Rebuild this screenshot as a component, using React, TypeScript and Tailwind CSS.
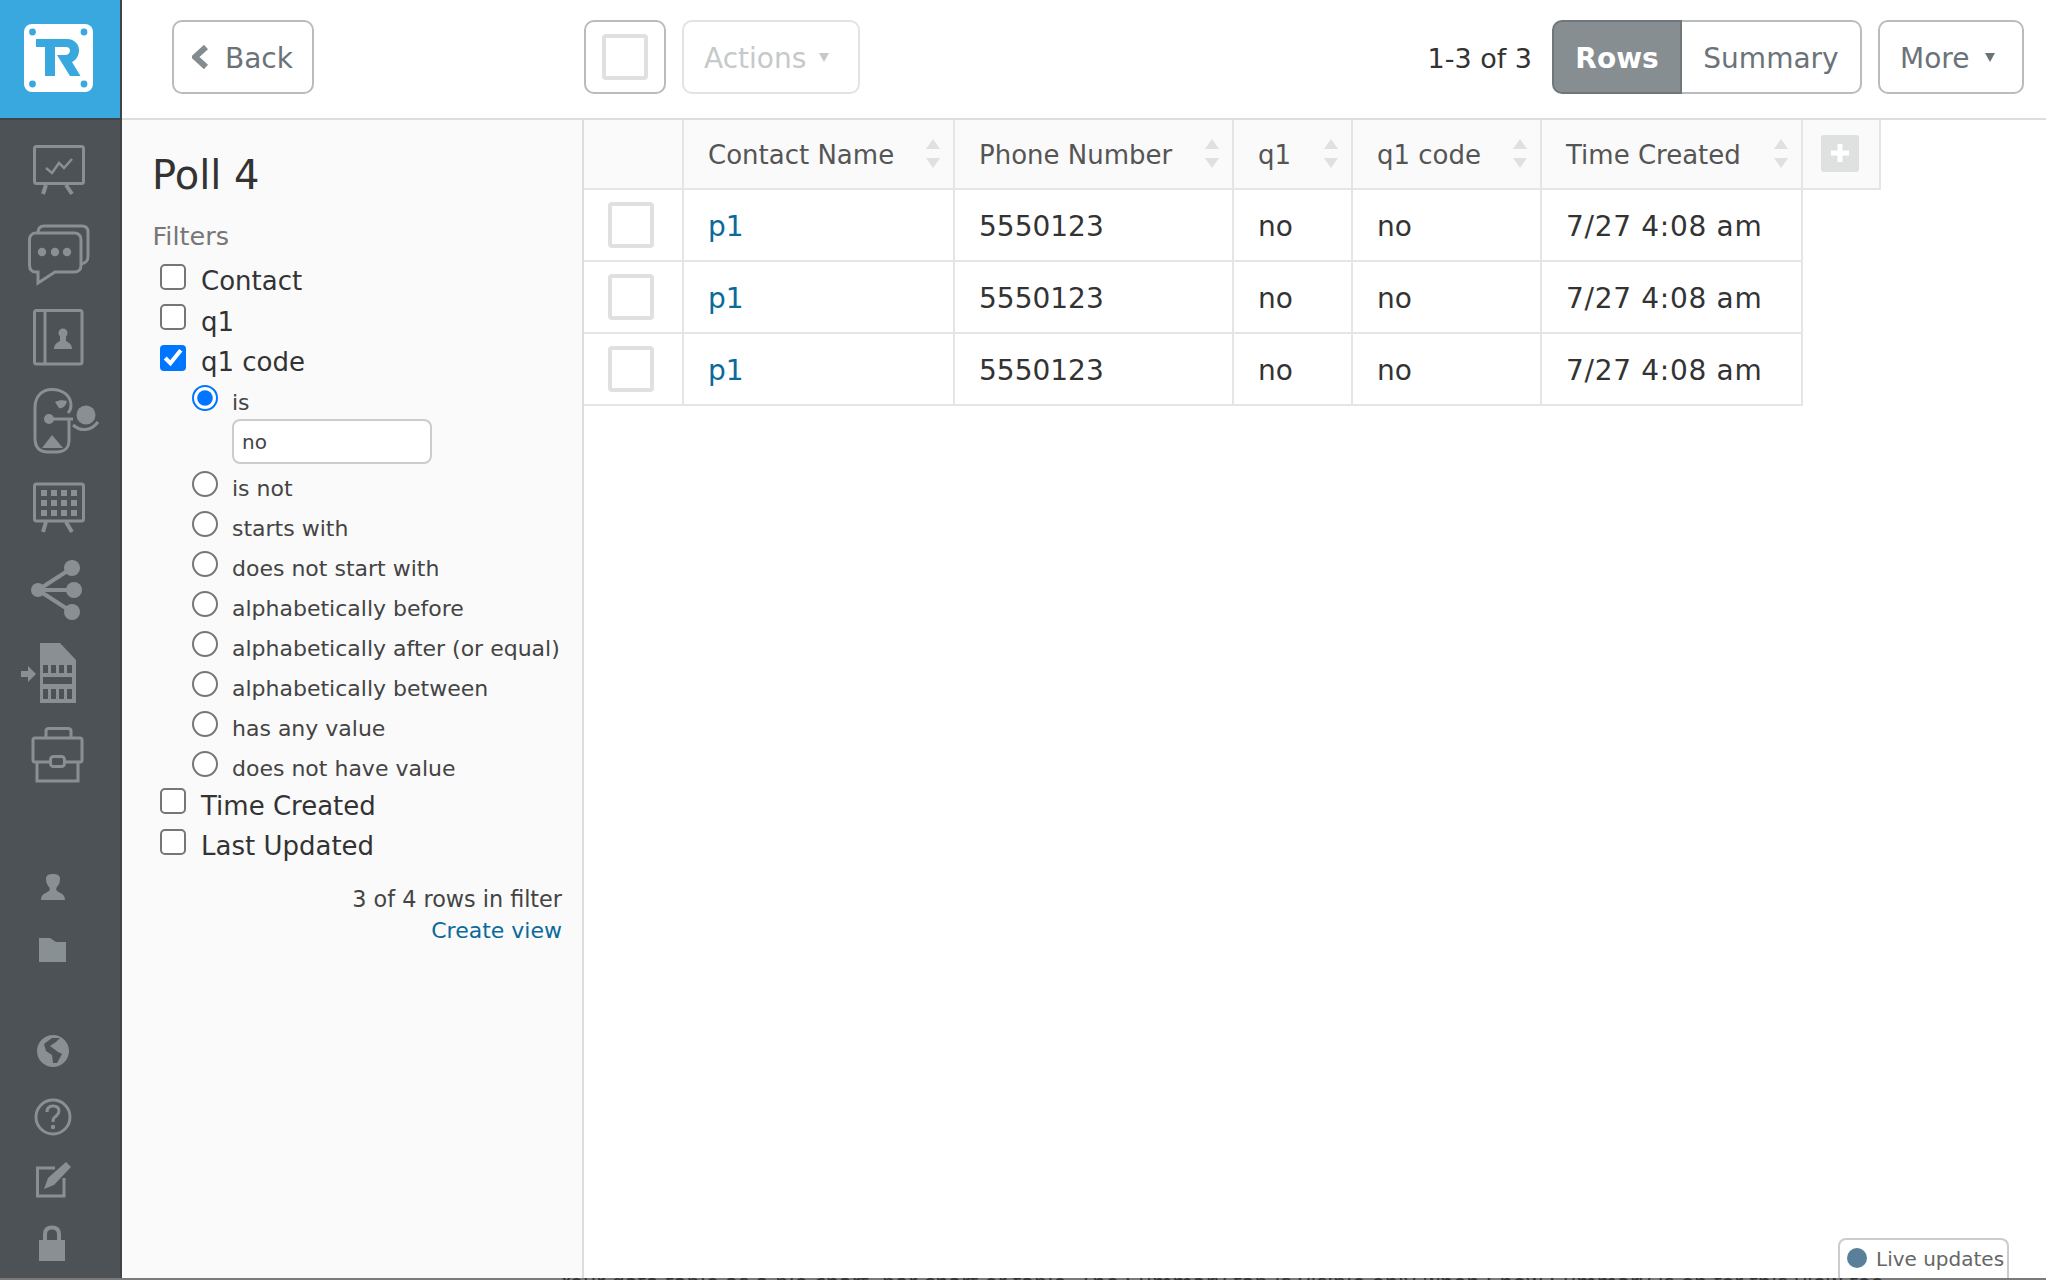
import type { ReactNode } from 'react'

const ICON = '#899093'
const SIDEBAR = '#4c5256'

function Row({ top, h, children }: { top: number; h: number; children: ReactNode }) {
  return (
    <svg viewBox={`0 ${top} 120 ${h}`} width={120} height={h} className="block shrink-0">
      {children}
    </svg>
  )
}

function Logo() {
  return (
    <svg viewBox="0 0 120 118" width={120} height={118} className="block">
      <rect x="24" y="24" width="69" height="68" rx="8" fill="#fff" />
      <circle cx="32.500" cy="32" r="3.400" fill="#38a8df" />
      <circle cx="84" cy="32" r="3.400" fill="#38a8df" />
      <circle cx="32.500" cy="84" r="3.400" fill="#38a8df" />
      <circle cx="84" cy="84" r="3.400" fill="#38a8df" />
      <path d="M36 39H67C75 39 79 45 79 50C79 56 76 60 72 62L80.500 76H70L57 55H65C68 55 70 53 70 50.500C70 48 68 47 66 47H55V76H45V47H36Z" fill="#38a8df" />
    </svg>
  )
}

function TopIcons() {
  return (
    <>
      <Row top={120} h={90}>
        <rect x="34.500" y="146.500" width="49" height="37" rx="2" fill="none" stroke={ICON} strokeWidth="3" />
        <polyline points="46,168 52,173 59,163 64,168 72,159" fill="none" stroke={ICON} strokeWidth="2.500" />
        <path d="M46 185L43 194M66 185L72 194" stroke={ICON} strokeWidth="4" />
      </Row>
      <Row top={210} h={85}>
        <path d="M38 233C38 228 40 226 44 226H82C86 226 88 228 88 232V256C88 261 86 263 81 264" fill="none" stroke={ICON} strokeWidth="3" />
        <path d="M36 233H74C79 233 81 236 81 240V265C81 270 79 272 74 272H55L38 283V272H36C32 272 29.500 270 29.500 265V240C29.500 236 32 233 36 233Z" fill={SIDEBAR} stroke={ICON} strokeWidth="3" />
        <circle cx="42" cy="252" r="4.200" fill={ICON} />
        <circle cx="55" cy="252" r="4.200" fill={ICON} />
        <circle cx="67" cy="252" r="4.200" fill={ICON} />
      </Row>
      <Row top={295} h={80}>
        <rect x="34.500" y="310.500" width="47.500" height="53.500" rx="2" fill="none" stroke={ICON} strokeWidth="3" />
        <path d="M45 310V364" stroke={ICON} strokeWidth="3" />
        <circle cx="63" cy="333" r="4.500" fill={ICON} />
        <path d="M54 349C54 344 58 342 60 341V336H66V341C68 342 72 344 72 349Z" fill={ICON} />
      </Row>
      <Row top={375} h={95}>
        <path d="M35 438V408C35 396 42 389.500 52 389.500C63 389.500 71 396 71 405C71 408 70 411 68 413" fill="none" stroke={ICON} strokeWidth="3" />
        <path d="M35 438C35 448 40 452 48 452H57C64 452 69 448 69 440V420" fill="none" stroke={ICON} strokeWidth="3" />
        <path d="M55 402C59 400 63 400 67 401C66 406 62 409 59 408Z" fill={ICON} />
        <circle cx="49" cy="419" r="5" fill={ICON} />
        <path d="M49 419H73" fill="none" stroke={ICON} strokeWidth="3" />
        <circle cx="86" cy="415" r="9.500" fill={ICON} />
        <path d="M73 425C81 432 91 431 98 422" fill="none" stroke={ICON} strokeWidth="3" />
        <path d="M42 448L52 435L63 448Z" fill={ICON} />
      </Row>
      <Row top={470} h={80}>
        <rect x="34.500" y="484" width="49" height="37" rx="2" fill="none" stroke={ICON} strokeWidth="3" />
        {[41, 51, 61, 71].map(x =>
          [490, 500, 510].map(y => <rect key={`${x}-${y}`} x={x} y={y} width="6" height="6" fill={ICON} />)
        )}
        <path d="M46 522L43 532M66 522L72 532" stroke={ICON} strokeWidth="4" />
      </Row>
      <Row top={550} h={85}>
        <path d="M38 590L72 568M38 590H74M38 590L72 612" stroke={ICON} strokeWidth="4" />
        <circle cx="38" cy="590" r="7" fill={ICON} />
        <circle cx="72" cy="568" r="8" fill={ICON} />
        <circle cx="74" cy="590" r="8" fill={ICON} />
        <circle cx="72" cy="612" r="8" fill={ICON} />
      </Row>
      <Row top={635} h={85}>
        <path d="M40 643H60L76 660V703H40Z" fill={ICON} />
        {[43, 51, 59, 67].map(x => (
          <rect key={x} x={x} y="665" width="5" height="8" fill={SIDEBAR} />
        ))}
        <rect x="43" y="677" width="29" height="7" fill={SIDEBAR} />
        {[43, 51, 59, 67].map(x => (
          <rect key={x} x={x} y="689" width="5" height="10" fill={SIDEBAR} />
        ))}
        <path d="M21 671H28V666L36 674L28 682V677H21Z" fill={ICON} />
      </Row>
      <Row top={720} h={70}>
        <rect x="33" y="738" width="49" height="24" rx="2" fill="none" stroke={ICON} strokeWidth="3" />
        <path d="M37 762V781H78V762" fill="none" stroke={ICON} strokeWidth="3" />
        <path d="M46 737V731C46 729 47 728.500 49 728.500H68C70 728.500 71 729 71 731V737" fill="none" stroke={ICON} strokeWidth="3" />
        <rect x="50.500" y="756.500" width="14" height="10" rx="3" fill={SIDEBAR} stroke={ICON} strokeWidth="3" />
      </Row>
    </>
  )
}

function BottomIcons() {
  return (
    <>
      <Row top={860} h={50}>
        <path d="M41 900C41 894 46 893 49 891C50 890 50 888 49 887C47 885 46 882 46 879C46 875 49 874 53 874C57 874 60 875 60 879C60 882 59 885 57 887C56 888 56 890 57 891C60 893 65 894 65 900Z" fill={ICON} />
      </Row>
      <Row top={910} h={110}>
        <path d="M39 938H50L56 942H66V962H39Z" fill={ICON} />
      </Row>
      <Row top={1020} h={60}>
        <circle cx="53" cy="1051" r="16" fill={ICON} />
        <path d="M44 1044L52 1038L60 1038L56 1042L50 1046L58 1052L62 1054L57 1063L53 1063L52 1055L46 1051Z" fill={SIDEBAR} />
      </Row>
      <Row top={1080} h={70}>
        <circle cx="53" cy="1117" r="17" fill="none" stroke={ICON} strokeWidth="3" />
        <path d="M47 1112C47 1108 49 1106 53 1106C57 1106 59 1108 59 1111C59 1114 57 1115 55 1117C53 1118 53 1120 53 1122" fill="none" stroke={ICON} strokeWidth="3" />
        <circle cx="53" cy="1127" r="2.200" fill={ICON} />
      </Row>
      <Row top={1150} h={60}>
        <path d="M55 1168H37.500V1196H64V1178" fill="none" stroke={ICON} strokeWidth="3" />
        <path d="M44 1189L48 1178L66 1162L71 1167L54 1185Z" fill={ICON} />
      </Row>
      <Row top={1210} h={68}>
        <rect x="39" y="1240" width="26" height="21" fill={ICON} />
        <path d="M45 1240V1234C45 1229 48 1227.500 52 1227.500C56 1227.500 59 1229 59 1234V1240" fill="none" stroke={ICON} strokeWidth="4" />
      </Row>
    </>
  )
}

function Caret({ className }: { className?: string }) {
  return (
    <svg viewBox="0 0 10 10" width={10} height={10} className={className}>
      <path d="M0 1H10L5 10Z" fill="currentColor" />
    </svg>
  )
}

function SortArrows() {
  return (
    <svg viewBox="0 0 14 29" width={14} height={29} className="shrink-0 -mt-[3px]">
      <path d="M7 0L14 10H0Z" fill="#dfe0e0" />
      <path d="M0 19H14L7 29Z" fill="#dfe0e0" />
    </svg>
  )
}

function CheckRow({ label, checked }: { label: string; checked?: boolean }) {
  return (
    <label className="flex h-[40.5px] items-start gap-[15px] pl-[38px] text-[26px] leading-[40px] text-[#333]">
      <input type="checkbox" defaultChecked={checked} className="m-0 mt-[1.3px] h-[13px] w-[13px] shrink-0 [zoom:2]" />
      <span>{label}</span>
    </label>
  )
}

function RadioRow({ label, checked, children }: { label: string; checked?: boolean; children?: ReactNode }) {
  return (
    <div className="flex min-h-[40px] items-start gap-[14px] pl-[70px] text-[22px] leading-[30px] text-[#444]">
      <input type="radio" name="q1op" defaultChecked={checked} className="m-0 h-[13px] w-[13px] shrink-0 [zoom:2]" />
      <div>
        <div className="mt-[3px]">{label}</div>
        {children}
      </div>
    </div>
  )
}

const columns = [
  { label: 'Contact Name', w: 'w-[271px]' },
  { label: 'Phone Number', w: 'w-[279px]' },
  { label: 'q1', w: 'w-[119px]' },
  { label: 'q1 code', w: 'w-[189px]' },
  { label: 'Time Created', w: 'w-[261px]' }
]

const radios = ['is not', 'starts with', 'does not start with', 'alphabetically before', 'alphabetically after (or equal)', 'alphabetically between', 'has any value', 'does not have value']

const btn = 'flex h-[74px] items-center rounded-[10px] border-2 border-[#b9bcbd] bg-white pt-[3px] text-[28px] text-[#6b7378]'

export default function App() {
  return (
    <div className="relative flex h-screen w-full flex-col overflow-hidden bg-white font-['DejaVu_Sans',sans-serif]">
      <div className="flex min-h-0 flex-1">
        {/* Sidebar */}
        <aside className="flex w-[122px] shrink-0 flex-col border-r-2 border-[#3f4448] bg-[#4c5256]">
          <div className="h-[118px] bg-[#38a8df]">
            <Logo />
          </div>
          <div className="h-[2px] bg-[#3f4448]" />
          <TopIcons />
          <div className="flex-1" />
          <BottomIcons />
        </aside>

        <div className="flex min-w-0 flex-1 flex-col">
          {/* Toolbar */}
          <header className="flex h-[120px] shrink-0 items-start border-b-2 border-[#dddddd] pt-[20px] pr-[22px]">
            <div className="w-[462px] shrink-0 pl-[50px]">
              <button className={`${btn} w-[142px] pl-[18px]`}>
                <svg viewBox="0 0 16 24" width={16} height={24} className="mr-[17px] -mt-[3px] shrink-0">
                  <path d="M14 2L3 12L14 22" fill="none" stroke="#858c90" strokeWidth="6" />
                </svg>
                Back
              </button>
            </div>
            <button className="flex h-[74px] w-[82px] items-center justify-center rounded-[10px] border-2 border-[#b9bcbd] bg-white">
              <span className="block h-[46px] w-[46px] rounded-[4px] border-4 border-[#e0e0e0]" />
            </button>
            <button className="ml-[16px] flex h-[74px] w-[178px] items-center rounded-[10px] border-2 border-[#e2e3e3] bg-white pt-[3px] pl-[20px] text-[28px] text-[#c6c9ca]">
              Actions
              <Caret className="ml-[13px] -mt-[3px] text-[#c6c9ca]" />
            </button>
            <span className="ml-auto mr-[20px] text-[27px] leading-[78px] text-[#333]">1-3 of 3</span>
            <div className="flex">
              <button className="flex h-[74px] w-[130px] items-center justify-center rounded-l-[10px] border-2 border-[#6f777a] bg-[#868e91] pt-[3px] text-[28px] font-bold text-white">
                Rows
              </button>
              <button className="flex h-[74px] w-[180px] items-center justify-center rounded-r-[10px] border-2 border-l-0 border-[#b9bcbd] bg-white pt-[3px] text-[28px] text-[#6b7378]">
                Summary
              </button>
            </div>
            <button className={`${btn} ml-[16px] w-[146px] pl-[20px]`}>
              More
              <Caret className="ml-[16px] -mt-[3px] text-[#6b7378]" />
            </button>
          </header>

          <div className="flex min-h-0 flex-1">
            {/* Filters */}
            <section className="w-[462px] shrink-0 border-r-2 border-[#dddddd] bg-[#fafafa] pt-[30px]">
              <h1 className="pl-[30px] text-[40px] leading-[50px] text-[#333]">Poll 4</h1>
              <div className="mt-[21px] pl-[30.500px] text-[25.500px] leading-[30px] text-[#777]">Filters</div>
              <div className="mt-[10px]">
                <CheckRow label="Contact" />
                <CheckRow label="q1" />
                <CheckRow label="q1 code" checked />
                <div className="pt-[2.500px]">
                  <RadioRow label="is" checked>
                    <input
                      defaultValue="no"
                      className="mt-[1px] mb-[6.500px] block h-[45px] w-[200px] rounded-[8px] border-2 border-[#cccccc] bg-white px-[8px] text-[20px] text-[#444] outline-none"
                    />
                  </RadioRow>
                </div>
                {radios.map(r => (
                  <RadioRow key={r} label={r} />
                ))}
                <div className="-mt-[5px]">
                  <CheckRow label="Time Created" />
                  <CheckRow label="Last Updated" />
                </div>
              </div>
              <div className="mt-[17px] pr-[20px] text-right text-[22.300px] leading-[31px] text-[#444]">
                <div>3 of 4 rows in filter</div>
                <a className="text-[22px] text-[#0a6a9a]">Create view</a>
              </div>
            </section>

            {/* Table */}
            <main className="min-w-0 flex-1 bg-white">
              <table className="w-[1297px] table-fixed border-separate border-spacing-0 text-left">
                <thead>
                  <tr>
                    <th className="h-[70px] w-[100px] border-r-2 border-b-2 border-[#e5e5e5] bg-[#fafafa]" />
                    {columns.map(c => (
                      <th key={c.label} className={`${c.w} h-[70px] border-r-2 border-b-2 border-[#e5e5e5] bg-[#fafafa] pt-[2px] pr-[13px] pl-[24px] text-[26px] font-normal text-[#555]`}>
                        <div className="flex items-center justify-between">
                          <span>{c.label}</span>
                          <SortArrows />
                        </div>
                      </th>
                    ))}
                    <th className="h-[70px] w-[78px] border-r-2 border-b-2 border-[#e5e5e5] bg-[#fafafa] pl-[18px]">
                      <span className="-mt-[2px] flex h-[37px] w-[38px] items-center justify-center rounded-[3px] bg-[#dfe1e1]">
                        <svg viewBox="0 0 20 20" width={20} height={20}>
                          <path d="M7.500 1H12.500V7.500H19V12.500H12.500V19H7.500V12.500H1V7.500H7.500Z" fill="#fff" />
                        </svg>
                      </span>
                    </th>
                  </tr>
                </thead>
                <tbody>
                  {[0, 1, 2].map(i => (
                    <tr key={i} className="text-[28px] text-[#333]">
                      <td className="h-[72px] border-r-2 border-b-2 border-[#e5e5e5] pl-[24px]">
                        <span className="block h-[46px] w-[46px] rounded-[4px] border-4 border-[#e0e0e0]" />
                      </td>
                      <td className="h-[72px] border-r-2 border-b-2 border-[#e5e5e5] pt-[3px] pl-[24px]">
                        <a className="text-[#0a6a9a]">p1</a>
                      </td>
                      <td className="h-[72px] border-r-2 border-b-2 border-[#e5e5e5] pt-[3px] pl-[24px]">5550123</td>
                      <td className="h-[72px] border-r-2 border-b-2 border-[#e5e5e5] pt-[3px] pl-[24px]">no</td>
                      <td className="h-[72px] border-r-2 border-b-2 border-[#e5e5e5] pt-[3px] pl-[24px]">no</td>
                      <td className="h-[72px] border-r-2 border-b-2 border-[#e5e5e5] pt-[3px] pl-[24px] tracking-[0.7px]">7/27 4:08 am</td>
                    </tr>
                  ))}
                </tbody>
              </table>
            </main>
          </div>
        </div>
      </div>

      {/* Clipped help text under the fold */}
      <footer className="h-[2px] shrink-0 overflow-hidden whitespace-nowrap bg-[#7a7a7a] pl-[560px] text-[21px] leading-[11px] text-[#333]">
        Your data table as a pie chart, bar chart or table. The Summary tab is visible only when Show Summary is on for this view too.
      </footer>

      {/* Live updates badge */}
      <div className="absolute right-[37px] bottom-[2px] flex h-[40px] w-[171px] items-start gap-[9px] rounded-t-[8px] border-2 border-b-0 border-[#cccccc] bg-white pt-[8px] pl-[7px] text-[20px] leading-[22px] text-[#666]">
        <span className="h-[20px] w-[20px] shrink-0 rounded-full bg-[#5a7f9a]" />
        <span className="whitespace-nowrap">Live updates</span>
      </div>
    </div>
  )
}
